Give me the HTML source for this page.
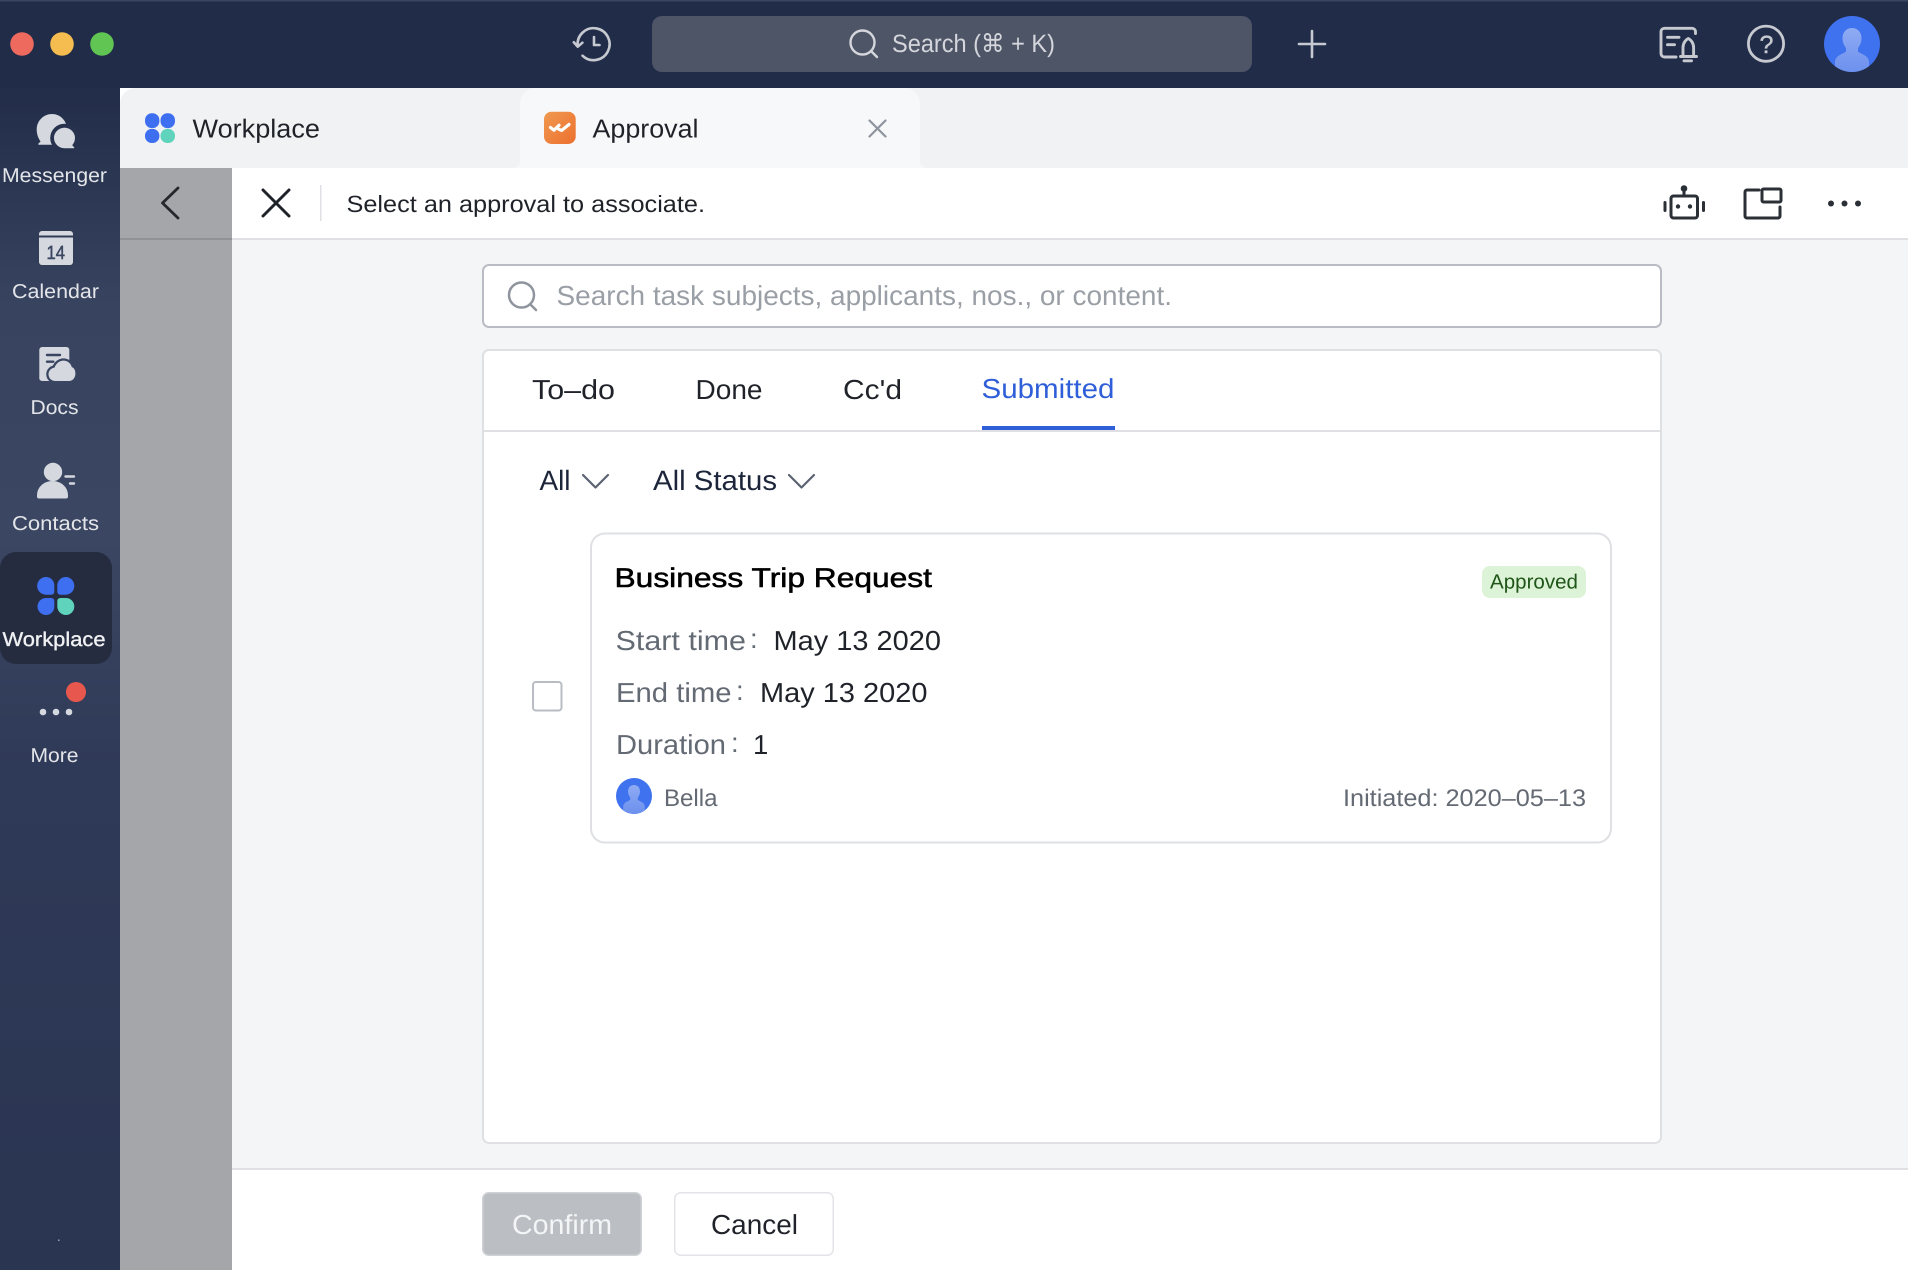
<!DOCTYPE html>
<html lang="en"><head><meta charset="utf-8"><title>Approval</title>
<style>
html,body{margin:0;padding:0;width:1908px;height:1270px;overflow:hidden;background:#fff}
svg{display:block}
text{font-family:"Liberation Sans","Noto Sans CJK SC",sans-serif;text-rendering:geometricPrecision}
.nav{font-size:20px;fill:#e3e5e9}
.ico{fill:none;stroke:#c6c9cf;stroke-width:2.6;stroke-linecap:round;stroke-linejoin:round}
.dk{fill:none;stroke:#2b2f36;stroke-width:3;stroke-linecap:round;stroke-linejoin:round}
.gr{fill:#646a73;font-size:27.5px}
.bl{fill:#1f2329;font-size:27.5px}
.tb{fill:#1f2329;font-size:27.5px}
.fl{fill:#1c2539;font-size:28px}
</style></head><body>
<svg width="1908" height="1270" viewBox="0 0 1908 1270" xmlns="http://www.w3.org/2000/svg">
<defs>
<linearGradient id="side" x1="0" y1="0" x2="0" y2="1270" gradientUnits="userSpaceOnUse">
<stop offset="0" stop-color="#212c49"/><stop offset=".08" stop-color="#232e4b"/><stop offset=".24" stop-color="#37435f"/><stop offset=".42" stop-color="#3b4762"/><stop offset=".6" stop-color="#2f3a58"/><stop offset="1" stop-color="#2a3552"/>
</linearGradient>
<linearGradient id="org" x1="0" y1="0" x2="1" y2="1"><stop offset="0" stop-color="#f09a50"/><stop offset="1" stop-color="#ec6f2e"/></linearGradient>
<linearGradient id="pers" x1="0" y1="0" x2="0" y2="1"><stop offset="0" stop-color="#8fabf3"/><stop offset="1" stop-color="#6b8fee"/></linearGradient>
<clipPath id="av1"><circle cx="1852" cy="44" r="28"/></clipPath>
<clipPath id="av2"><circle cx="634" cy="796" r="18"/></clipPath>
</defs>

<!-- base -->
<rect width="1908" height="1270" fill="#fff"/>
<rect x="0" y="0" width="120" height="1270" fill="url(#side)"/>
<rect x="0" y="0" width="1908" height="88" fill="#212c49"/>
<rect x="0" y="0" width="1908" height="1.5" fill="#3a4560"/>

<!-- traffic lights -->
<circle cx="22" cy="44" r="11.8" fill="#ee6a5f"/>
<circle cx="62" cy="44" r="11.8" fill="#f5bd4f"/>
<circle cx="102" cy="44" r="11.8" fill="#61c554"/>

<!-- history -->
<g transform="translate(1.500 0)">
<path class="ico" d="M576.2 46A16 16 0 1 1 581 55.7"/>
<path class="ico" d="M572.3 42.300l4 4.400 4.600-4"/>
<path class="ico" d="M592.500 37v8h5.500"/>
</g>

<!-- search pill -->
<rect x="652" y="16" width="600" height="56" rx="10" fill="#4d5567"/>
<circle cx="862.5" cy="42.5" r="12" fill="none" stroke="#d4d6db" stroke-width="2.4"/>
<path d="M871 51l6 6" stroke="#d4d6db" stroke-width="2.4" stroke-linecap="round"/>
<text x="892" y="52" font-size="25" fill="#d4d6db" textLength="163" lengthAdjust="spacingAndGlyphs" style='font-family:"Liberation Sans","DejaVu Sans",sans-serif'>Search (⌘ + K)</text>

<!-- plus -->
<path class="ico" d="M1312 31v26M1299 44h26"/>

<!-- inbox bell -->
<path class="ico" style="stroke-width:2.900" d="M1695.500 33.500v-1.700a3.500 3.500 0 0 0-3.500-3.500h-27.500a3.500 3.500 0 0 0-3.500 3.500v21.700a3.500 3.500 0 0 0 3.500 3.500h11.500"/>
<path class="ico" style="stroke-width:2.900" d="M1667.500 37.300h11.500M1667.500 44.700h7"/>
<path class="ico" style="stroke-width:2.900" d="M1683 56v-8.500c0-4 2.300-7.500 5.300-9 3 1.500 5.300 5 5.300 9V56M1680.500 56.500h16M1684 60.800h7.500"/>

<!-- help -->
<circle cx="1766" cy="43.700" r="17.600" fill="none" stroke="#c6c9cf" stroke-width="2.800"/>
<text x="1759.500" y="53" font-size="25" fill="#c6c9cf" stroke="#c6c9cf" stroke-width=".4">?</text>

<!-- avatar -->
<circle cx="1852" cy="44" r="28" fill="#3f72ee"/>
<g clip-path="url(#av1)"><path fill="url(#pers)" d="M1852 28c5.500 0 9.500 4 9.500 10 0 4-1.500 7.500-3.500 10v3c0 2.500 11 3.500 11 11v12h-34v-12c0-7.500 11-8.500 11-11v-3c-2-2.500-3.500-6-3.500-10 0-6 4-10 9.500-10z"/></g>

<!-- tab strip -->
<path d="M120 168V104a16 16 0 0 1 16-16H1908V168z" fill="#f1f2f4"/>
<path d="M512 168c6 0 8-3 8-8V104a16 16 0 0 1 16-16H904a16 16 0 0 1 16 16V160c0 5 2 8 8 8z" fill="#f7f8fa"/>
<!-- workplace tab icon -->
<rect x="145" y="113.300" width="14.400" height="14.800" rx="6.800" fill="#3e6ff0"/>
<rect x="160.500" y="113.300" width="14.500" height="14.800" rx="6.800" fill="#3e6ff0"/>
<rect x="145" y="128.900" width="14.400" height="14.100" rx="6.800" fill="#3e6ff0"/>
<rect x="160.500" y="128.900" width="14.500" height="14.100" rx="6.800" fill="#5fd3bb"/>
<text x="192.500" y="137.500" font-size="26" fill="#1f2329" textLength="127.500" lengthAdjust="spacingAndGlyphs">Workplace</text>
<!-- approval tab -->
<rect x="544" y="111.700" width="31.700" height="32.300" rx="7.500" fill="url(#org)"/>
<path d="M550.500 127.500l3.500 2.700 5-5M558.500 129l3 1.500 7.500-6" fill="none" stroke="#fff" stroke-width="3.200" stroke-linecap="round" stroke-linejoin="round"/>
<text x="592.500" y="137.500" font-size="26" fill="#1f2329" textLength="106" lengthAdjust="spacingAndGlyphs">Approval</text>
<path d="M869.500 120.500l16 16M885.500 120.500l-16 16" stroke="#8f959e" stroke-width="2.200" stroke-linecap="round"/>

<!-- back panel -->
<rect x="120" y="168" width="112" height="1102" fill="#a5a6a9"/>
<rect x="120" y="238" width="112" height="2" fill="#919296"/>
<path d="M178 188l-15.500 15 15.500 15" fill="none" stroke="#24272c" stroke-width="2.800" stroke-linecap="round" stroke-linejoin="round"/>

<!-- header -->
<rect x="232" y="168" width="1676" height="70" fill="#fff"/>
<rect x="232" y="238" width="1676" height="2" fill="#dee0e3"/>
<path d="M263 190l26 26M289 190l-26 26" stroke="#1f2329" stroke-width="3" stroke-linecap="round"/>
<rect x="320" y="185" width="1.500" height="36" fill="#dee0e3"/>
<text x="346.500" y="212" font-size="23.500" fill="#1f2329" textLength="358.500" lengthAdjust="spacingAndGlyphs">Select an approval to associate.</text>

<!-- robot -->
<rect x="1671" y="196" width="26.500" height="22" rx="2.500" class="dk"/>
<path class="dk" d="M1684 196v-7"/>
<circle cx="1684" cy="188.500" r="3.300" fill="#2b2f36"/>
<circle cx="1678" cy="206.500" r="2.200" fill="#2b2f36"/>
<circle cx="1690" cy="206.500" r="2.200" fill="#2b2f36"/>
<path class="dk" d="M1665 202.500v8M1703.500 202.500v8" stroke-width="2.600"/>
<!-- window -->
<path class="dk" d="M1759 190h-12a2 2 0 0 0-2 2v24a2 2 0 0 0 2 2h31a2 2 0 0 0 2-2v-9"/>
<rect x="1762" y="189" width="19" height="13" rx="1.500" class="dk"/>
<!-- more -->
<circle cx="1831" cy="203.500" r="3" fill="#2b2f36"/><circle cx="1844.500" cy="203.500" r="3" fill="#2b2f36"/><circle cx="1858" cy="203.500" r="3" fill="#2b2f36"/>

<!-- content -->
<rect x="232" y="240" width="1676" height="928" fill="#f4f5f7"/>
<rect x="232" y="1168" width="1676" height="2" fill="#dee0e3"/>

<!-- search -->
<rect x="483" y="265" width="1178" height="62" rx="6" fill="#fff" stroke="#b9bcc3" stroke-width="2"/>
<circle cx="521.500" cy="295" r="12.500" fill="none" stroke="#8f959e" stroke-width="2.500"/>
<path d="M530.500 304.500l5.500 5.500" stroke="#8f959e" stroke-width="2.500" stroke-linecap="round"/>
<text x="556.500" y="305" font-size="27.500" fill="#9a9fa6" textLength="615.500" lengthAdjust="spacingAndGlyphs">Search task subjects, applicants, nos., or content.</text>

<!-- panel -->
<rect x="483" y="350" width="1178" height="793" rx="6" fill="#fff" stroke="#dee0e3" stroke-width="2"/>
<rect x="484" y="430" width="1176" height="2" fill="#dee0e3"/>
<text class="tb" x="532" y="399" textLength="83" lengthAdjust="spacingAndGlyphs">To–do</text>
<text class="tb" x="695.500" y="399" textLength="67" lengthAdjust="spacingAndGlyphs">Done</text>
<text class="tb" x="843" y="399" textLength="59" lengthAdjust="spacingAndGlyphs">Cc'd</text>
<text x="981.500" y="398" font-size="27.500" fill="#2f5fd8" textLength="133" lengthAdjust="spacingAndGlyphs">Submitted</text>
<rect x="982" y="426" width="133" height="4" fill="#2f5fd8"/>

<!-- filters -->
<text class="fl" x="539.500" y="490" textLength="31" lengthAdjust="spacingAndGlyphs">All</text>
<path d="M583 475l12.500 12.500L608 475" fill="none" stroke="#5b6270" stroke-width="2.200" stroke-linecap="round" stroke-linejoin="round"/>
<text class="fl" x="653" y="490" textLength="124" lengthAdjust="spacingAndGlyphs">All Status</text>
<path d="M789 475l12.500 12.500L814 475" fill="none" stroke="#5b6270" stroke-width="2.200" stroke-linecap="round" stroke-linejoin="round"/>

<!-- checkbox -->
<rect x="533" y="682" width="28.500" height="28.500" rx="3" fill="#fff" stroke="#b9bcc3" stroke-width="2"/>

<!-- card -->
<rect x="591" y="533.500" width="1020" height="309" rx="14" fill="#fff" stroke="#dee0e3" stroke-width="2"/>
<text x="614.500" y="587" font-size="27" font-weight="400" fill="#000" stroke="#000" stroke-width=".55" textLength="317.500" lengthAdjust="spacingAndGlyphs">Business Trip Request</text>
<rect x="1482" y="566" width="104" height="32" rx="8" fill="#ddf3d7"/>
<text x="1490" y="588.500" font-size="20.500" fill="#1f5518" textLength="88" lengthAdjust="spacingAndGlyphs">Approved</text>

<text class="gr" x="615.500" y="650" textLength="130.500" lengthAdjust="spacingAndGlyphs">Start time</text>
<text class="gr" x="750" y="648">:</text>
<text class="bl" x="773.500" y="650" textLength="167.500" lengthAdjust="spacingAndGlyphs">May 13 2020</text>

<text class="gr" x="616" y="702" textLength="115.500" lengthAdjust="spacingAndGlyphs">End time</text>
<text class="gr" x="736" y="700">:</text>
<text class="bl" x="760" y="702" textLength="167.500" lengthAdjust="spacingAndGlyphs">May 13 2020</text>

<text class="gr" x="616" y="754" textLength="110" lengthAdjust="spacingAndGlyphs">Duration</text>
<text class="gr" x="731" y="752">:</text>
<text class="bl" x="753" y="754">1</text>

<circle cx="634" cy="796" r="18" fill="#3f72ee"/>
<g clip-path="url(#av2)"><path fill="url(#pers)" d="M634 785c3.500 0 6 2.500 6 6.500 0 2.500-1 4.500-2.200 6.200v1.800c0 1.500 7 2.200 7 7v8h-21.600v-8c0-4.800 7-5.500 7-7v-1.800c-1.200-1.700-2.200-3.700-2.200-6.200 0-4 2.500-6.500 6-6.500z"/></g>
<text x="664" y="806" font-size="24" fill="#646a73" textLength="53.500" lengthAdjust="spacingAndGlyphs">Bella</text>
<text x="1343" y="806" font-size="24" fill="#646a73" textLength="243" lengthAdjust="spacingAndGlyphs">Initiated: 2020–05–13</text>

<!-- footer -->
<rect x="482.750" y="1192.750" width="158.500" height="62.500" rx="6" fill="#bbbec3" stroke="#cfd1d5" stroke-width="1.500"/>
<text x="512" y="1234" font-size="27.500" fill="#f4f5f6" textLength="100" lengthAdjust="spacingAndGlyphs">Confirm</text>
<rect x="674.750" y="1192.750" width="158.500" height="62.500" rx="6" fill="#fff" stroke="#e3e4e7" stroke-width="1.500"/>
<text x="711" y="1234" font-size="27.500" fill="#1f2329" textLength="87" lengthAdjust="spacingAndGlyphs">Cancel</text>

<!-- sidebar: messenger -->
<path fill="#d5d8df" d="M52 114c8.500 0 15 7 15 15.500 0 8-6 14.800-14 15.300H39c-.8 0-1-.9-.4-1.400l2-1.900C38.500 138.500 36.700 134.500 36.700 129.500 36.700 121 43.500 114 52 114z"/>
<circle cx="64.500" cy="138" r="14.300" fill="#27324f"/>
<path fill="#d5d8df" d="M64.500 127.700c5.800 0 10.500 4.600 10.500 10.200 0 3-1.100 5.400-2.800 7.300l2 2.200c.3.400 0 .8-.5.800H64.500c-5.800 0-10.500-4.600-10.500-10.300 0-5.600 4.700-10.200 10.500-10.200z"/>
<text class="nav" x="2" y="182" textLength="105" lengthAdjust="spacingAndGlyphs">Messenger</text>

<!-- calendar -->
<path fill="#d5d8df" d="M39 235.500v-1.500a3 3 0 0 1 3-3h28a3 3 0 0 1 3 3v1.500z"/>
<path fill="#d5d8df" d="M39 237.500h34V262a3 3 0 0 1-3 3H42a3 3 0 0 1-3-3z"/>
<text x="46.500" y="258.800" font-size="19" fill="#3a4661" stroke="#3a4661" stroke-width=".5" textLength="18.500" lengthAdjust="spacingAndGlyphs">14</text>
<text class="nav" x="12" y="298" textLength="87" lengthAdjust="spacingAndGlyphs">Calendar</text>

<!-- docs -->
<rect x="39.300" y="347" width="30" height="34" rx="2.800" fill="#d5d8df"/>
<path d="M47 355h13M47 361.700h6.300" stroke="#3a4661" stroke-width="2.400" stroke-linecap="round"/>
<path fill="#3a4661" stroke="#3a4661" stroke-width="4.500" d="M55.500 381c-4 0-7-3-7-6.800 0-3.400 2.600-6.200 6-6.600 1.500-4.200 5-7 9-7 4 0 7.300 2.700 8.300 6.500 2.400.7 3.600 3.400 3.600 6.500 0 3.900-2.500 7.400-6.400 7.400z"/>
<path fill="#d5d8df" d="M55.500 381c-4 0-7-3-7-6.800 0-3.400 2.600-6.200 6-6.600 1.500-4.200 5-7 9-7 4 0 7.300 2.700 8.300 6.500 2.400.7 3.600 3.400 3.600 6.500 0 3.900-2.500 7.400-6.400 7.400z"/>
<text class="nav" x="30.500" y="414" textLength="48" lengthAdjust="spacingAndGlyphs">Docs</text>

<!-- contacts -->
<circle cx="53" cy="472" r="9.200" fill="#d5d8df"/>
<path fill="#d5d8df" d="M37 495.500c0-8.500 7-14.500 15.500-14.500S68 487 68 495.500v1a2 2 0 0 1-2 2H39a2 2 0 0 1-2-2z"/>
<path d="M65.500 476.500h8.500M70 483.500h4" stroke="#d5d8df" stroke-width="2.400" stroke-linecap="round"/>
<text class="nav" x="12" y="530" textLength="87" lengthAdjust="spacingAndGlyphs">Contacts</text>

<!-- workplace active -->
<rect x="0" y="552" width="112" height="112" rx="16" fill="#252c3f"/>
<path fill="#3e6ff0" d="M46 577a8.300 8.300 0 0 1 8.300 8.300v6.400a3 3 0 0 1-3 3H46a8.850 8.850 0 0 1 0-17.700z"/>
<path fill="#3e6ff0" d="M65.800 577a8.500 8.850 0 0 1 0 17.700H60.300a3 3 0 0 1-3-3V585.500a8.500 8.500 0 0 1 8.500-8.500z"/>
<path fill="#3e6ff0" d="M46 598H51.300a3 3 0 0 1 3 3v5.700a8.300 8.300 0 0 1-8.300 8.300a8.500 8.500 0 0 1 0-17z"/>
<path fill="#5fd3bb" d="M60.300 598H66a8.300 8.500 0 0 1 0 17a8.700 8.700 0 0 1-8.700-8.700V601a3 3 0 0 1 3-3z"/>
<text x="2.500" y="646" font-size="20" fill="#f0f1f3" stroke="#f0f1f3" stroke-width=".35" textLength="103" lengthAdjust="spacingAndGlyphs">Workplace</text>

<!-- more -->
<circle cx="43" cy="712" r="3.300" fill="#d5d8df"/><circle cx="56" cy="712" r="3.300" fill="#d5d8df"/><circle cx="69" cy="712" r="3.300" fill="#d5d8df"/>
<circle cx="76" cy="692" r="10" fill="#e8574d"/>
<text class="nav" x="30.500" y="762" textLength="48" lengthAdjust="spacingAndGlyphs">More</text>
<rect x="58" y="1239.500" width="1.500" height="1.500" fill="#9aa1b0"/>
</svg>
</body></html>
